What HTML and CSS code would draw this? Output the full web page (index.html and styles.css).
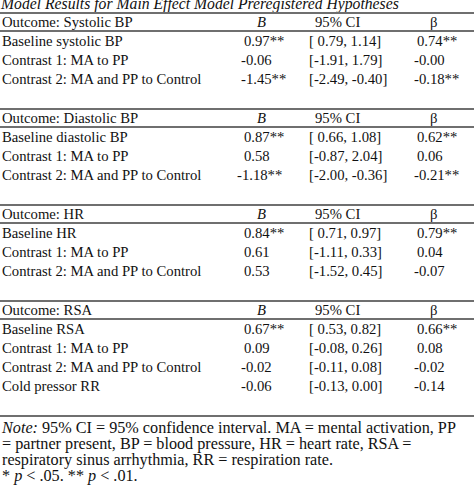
FILE: index.html
```html
<!DOCTYPE html>
<html>
<head>
<meta charset="utf-8">
<link rel="stylesheet" href="styles.css">
</head>
<body>
<div class="page">
  <div class="title">Model Results for Main Effect Model Preregistered Hypotheses</div>

  <div class="section">
    <div class="row head"><span class="lab">Outcome: Systolic BP</span><span class="hb"><i>B</i></span><span class="hci">95% CI</span><span class="hbeta">β</span></div>
    <div class="row"><span class="lab">Baseline systolic BP</span><span class="b">0.97**</span><span class="ci">[ 0.79, 1.14]</span><span class="be">0.74**</span></div>
    <div class="row"><span class="lab">Contrast 1: MA to PP</span><span class="b neg">-0.06</span><span class="ci">[-1.91, 1.79]</span><span class="be neg">-0.00</span></div>
    <div class="row"><span class="lab">Contrast 2: MA and PP to Control</span><span class="b neg">-1.45**</span><span class="ci">[-2.49, -0.40]</span><span class="be neg">-0.18**</span></div>
    <div class="row"></div>
  </div>

  <div class="section">
    <div class="row head"><span class="lab">Outcome: Diastolic BP</span><span class="hb"><i>B</i></span><span class="hci">95% CI</span><span class="hbeta">β</span></div>
    <div class="row"><span class="lab">Baseline diastolic BP</span><span class="b">0.87**</span><span class="ci">[ 0.66, 1.08]</span><span class="be">0.62**</span></div>
    <div class="row"><span class="lab">Contrast 1: MA to PP</span><span class="b">0.58</span><span class="ci">[-0.87, 2.04]</span><span class="be">0.06</span></div>
    <div class="row"><span class="lab">Contrast 2: MA and PP to Control</span><span class="b neg2">-1.18**</span><span class="ci">[-2.00, -0.36]</span><span class="be neg">-0.21**</span></div>
    <div class="row"></div>
  </div>

  <div class="section">
    <div class="row head"><span class="lab">Outcome: HR</span><span class="hb"><i>B</i></span><span class="hci">95% CI</span><span class="hbeta">β</span></div>
    <div class="row"><span class="lab">Baseline HR</span><span class="b">0.84**</span><span class="ci">[ 0.71, 0.97]</span><span class="be">0.79**</span></div>
    <div class="row"><span class="lab">Contrast 1: MA to PP</span><span class="b">0.61</span><span class="ci">[-1.11, 0.33]</span><span class="be">0.04</span></div>
    <div class="row"><span class="lab">Contrast 2: MA and PP to Control</span><span class="b">0.53</span><span class="ci">[-1.52, 0.45]</span><span class="be neg">-0.07</span></div>
    <div class="row"></div>
  </div>

  <div class="section">
    <div class="row head"><span class="lab">Outcome: RSA</span><span class="hb"><i>B</i></span><span class="hci">95% CI</span><span class="hbeta">β</span></div>
    <div class="row"><span class="lab">Baseline RSA</span><span class="b">0.67**</span><span class="ci">[ 0.53, 0.82]</span><span class="be">0.66**</span></div>
    <div class="row"><span class="lab">Contrast 1: MA to PP</span><span class="b">0.09</span><span class="ci">[-0.08, 0.26]</span><span class="be">0.08</span></div>
    <div class="row"><span class="lab">Contrast 2: MA and PP to Control</span><span class="b neg">-0.02</span><span class="ci">[-0.11, 0.08]</span><span class="be neg">-0.02</span></div>
    <div class="row"><span class="lab">Cold pressor RR</span><span class="b neg">-0.06</span><span class="ci">[-0.13, 0.00]</span><span class="be neg">-0.14</span></div>
    <div class="row"></div>
  </div>

  <div class="note">
    <div class="nl"><i>Note:</i> 95% CI = 95% confidence interval. MA = mental activation, PP</div>
    <div class="nl">= partner present, BP = blood pressure, HR = heart rate, RSA =</div>
    <div class="nl">respiratory sinus arrhythmia, RR = respiration rate.</div>
    <div class="nl">* <i>p</i> &lt; .05. ** <i>p</i> &lt; .01.</div>
  </div>
</div>
</body>
</html>
```
FILE: styles.css
```css
html, body {
  margin: 0;
  padding: 0;
  background: #ffffff;
}
body {
  font-family: "Liberation Serif", "Times New Roman", serif;
  font-size: 14.7px;
  color: #111111;
  width: 474px;
  height: 488px;
  overflow: hidden;
}
.page {
  display: flex;
  flex-direction: column;
}
.title {
  font-style: italic;
  font-size: 15.7px;
  height: 12px;
  line-height: 17px;
  margin-top: -5px;
  padding-bottom: 5px;
  padding-left: 1px;
  white-space: nowrap;
  box-sizing: content-box;
}
.section {
  border-top: 2px solid #6f6f6f;
  display: flex;
  flex-direction: column;
}
.row {
  display: grid;
  grid-template-columns: 241px 64px 106px 63px;
  height: 19px;
  line-height: 19px;
  white-space: nowrap;
}
.row.head {
  height: 16px;
  line-height: 16px;
  border-bottom: 2px solid #6f6f6f;
}
.lab {
  padding-left: 2px;
}
.b {
  padding-left: 3px;
}
.ci {
  padding-left: 4px;
}
.be {
  padding-left: 6px;
}
.neg {
  margin-left: -3px;
}
.neg2 {
  margin-left: -7px;
}
.hb {
  padding-left: 16px;
}
.hci {
  padding-left: 10px;
}
.hbeta {
  padding-left: 19px;
}
.note {
  border-top: 2px solid #6f6f6f;
  padding: 3px 0 0 2px;
  display: flex;
  flex-direction: column;
  font-size: 16.2px;
}
.nl {
  line-height: 16px;
  height: 16px;
  white-space: nowrap;
}
```
